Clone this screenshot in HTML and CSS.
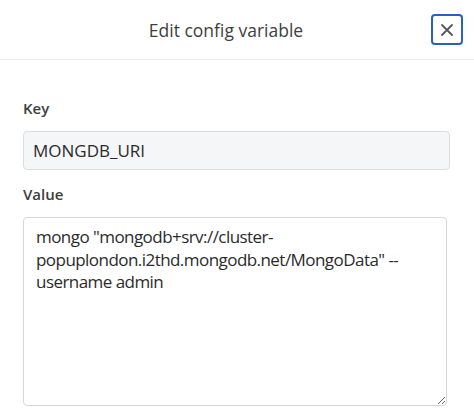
FILE: index.html
```html
<!DOCTYPE html>
<html>
<head>
<meta charset="utf-8">
<link rel="stylesheet" href="styles.css">
</head>
<body>
<div class="modal">
  <header class="modal-header">
    <h1 class="title">Edit config variable</h1>
    <button class="close" aria-label="Close">
      <svg width="14" height="14" viewBox="0 0 14 14"><path d="M2 2 L12 12 M12 2 L2 12" stroke="#54585e" stroke-width="1.8" stroke-linecap="round" fill="none"/></svg>
    </button>
  </header>
  <form class="modal-body">
    <label class="label" for="key">Key</label>
    <input class="input" id="key" type="text" value="MONGDB_URI">
    <label class="label label-value" for="val">Value</label>
    <textarea class="textarea" id="val">mongo "mongodb+srv://cluster-popuplondon.i2thd.mongodb.net/MongoData" --username admin</textarea>
  </form>
</div>
</body>
</html>
```
FILE: styles.css
```css
html, body {
  margin: 0;
  padding: 0;
  background: #ffffff;
  font-family: "Open Sans", "Liberation Sans", sans-serif;
  color: #3e3e3c;
}
.modal {
  width: 474px;
  height: 420px;
  overflow: hidden;
}
.modal-header {
  height: 59px;
  border-bottom: 1px solid #ececec;
  display: flex;
  align-items: center;
  justify-content: center;
  padding-right: 22px;
  position: relative;
}
.title {
  margin: 0;
  font-size: 17.5px;
  font-weight: 400;
  color: #3e3e3c;
}
.close {
  position: absolute;
  left: 431px;
  top: 14px;
  width: 32px;
  height: 31px;
  box-sizing: border-box;
  border: 2px solid #2a5fc4;
  border-radius: 4px;
  background: #fff;
  padding: 0;
  display: flex;
  align-items: center;
  justify-content: center;
}
.modal-body {
  padding: 38px 0 0 23px;
  display: flex;
  flex-direction: column;
  align-items: flex-start;
}
.label {
  font-size: 15px;
  font-weight: 600;
  line-height: 20px;
  color: #3e3e3c;
  margin-bottom: 13px;
}
.label-value {
  margin-top: 14px;
}
.input {
  width: 427px;
  height: 39px;
  box-sizing: border-box;
  border: 1px solid #dcdde2;
  border-radius: 4px;
  background: #f5f6f8;
  padding: 0 9px;
  font-family: inherit;
  font-size: 17px;
  color: #2b2b2b;
  margin: 0;
  outline: none;
}
.textarea {
  width: 424px;
  height: 189px;
  box-sizing: border-box;
  border: 1px solid #d6d7dc;
  border-radius: 4px;
  background: #fff;
  padding: 8px 12px;
  font-family: inherit;
  font-size: 17px;
  line-height: 22.5px;
  letter-spacing: -0.55px;
  color: #2b2b2b;
  margin: 0;
  outline: none;
  resize: both;
}
```
